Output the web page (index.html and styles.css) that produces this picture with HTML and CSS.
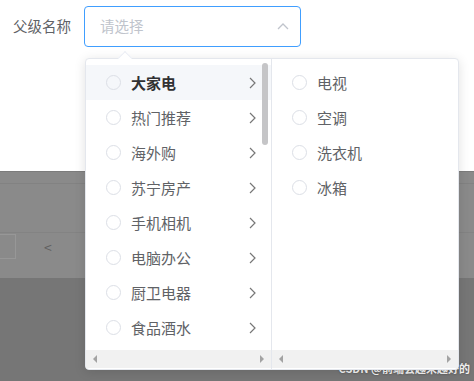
FILE: index.html
```html
<!DOCTYPE html>
<html lang="zh-CN">
<head>
    <meta charset="UTF-8" />
    <title>级联选择</title>
    <link rel="stylesheet" href="styles.css">
</head>
<body>
<div class="top">
    <div class="form-row">
        <label class="form-label">父级名称</label>
        <div class="select-input">
            <span class="placeholder">请选择</span>
            <svg class="caret" width="12" height="8" viewBox="0 0 12 8"><path d="M1 7 L6 2 L11 7" fill="none" stroke="#c0c4cc" stroke-width="1.3"/></svg>
        </div>
    </div>
</div>

<div class="backdrop">
    <div class="backdrop-upper">
        <div class="bar-line"></div>
        <div class="pager-row">
            <div class="pager-box"></div>
            <span class="pager-prev">&lt;</span>
        </div>
    </div>
    <div class="backdrop-lower"></div>
    <div class="watermark">CSDN @前端会越来越好的</div>
</div>

<div class="cascader">
    <div class="pointer"></div>
    <div class="menu menu-first">
        <div class="menu-list">
            <div class="item active"><span class="radio"></span><span class="label">大家电</span><svg class="chev" width="7" height="12" viewBox="0 0 7 12"><path d="M1 1 L6 6 L1 11" fill="none" stroke="#777" stroke-width="1.2"/></svg></div>
            <div class="item"><span class="radio"></span><span class="label">热门推荐</span><svg class="chev" width="7" height="12" viewBox="0 0 7 12"><path d="M1 1 L6 6 L1 11" fill="none" stroke="#777" stroke-width="1.2"/></svg></div>
            <div class="item"><span class="radio"></span><span class="label">海外购</span><svg class="chev" width="7" height="12" viewBox="0 0 7 12"><path d="M1 1 L6 6 L1 11" fill="none" stroke="#777" stroke-width="1.2"/></svg></div>
            <div class="item"><span class="radio"></span><span class="label">苏宁房产</span><svg class="chev" width="7" height="12" viewBox="0 0 7 12"><path d="M1 1 L6 6 L1 11" fill="none" stroke="#777" stroke-width="1.2"/></svg></div>
            <div class="item"><span class="radio"></span><span class="label">手机相机</span><svg class="chev" width="7" height="12" viewBox="0 0 7 12"><path d="M1 1 L6 6 L1 11" fill="none" stroke="#777" stroke-width="1.2"/></svg></div>
            <div class="item"><span class="radio"></span><span class="label">电脑办公</span><svg class="chev" width="7" height="12" viewBox="0 0 7 12"><path d="M1 1 L6 6 L1 11" fill="none" stroke="#777" stroke-width="1.2"/></svg></div>
            <div class="item"><span class="radio"></span><span class="label">厨卫电器</span><svg class="chev" width="7" height="12" viewBox="0 0 7 12"><path d="M1 1 L6 6 L1 11" fill="none" stroke="#777" stroke-width="1.2"/></svg></div>
            <div class="item"><span class="radio"></span><span class="label">食品酒水</span><svg class="chev" width="7" height="12" viewBox="0 0 7 12"><path d="M1 1 L6 6 L1 11" fill="none" stroke="#777" stroke-width="1.2"/></svg></div>
        </div>
        <div class="vthumb"></div>
        <div class="hscroll"><span class="tri tri-left"></span><span class="tri tri-right"></span></div>
    </div>
    <div class="menu menu-second">
        <div class="menu-list">
            <div class="item"><span class="radio"></span><span class="label">电视</span></div>
            <div class="item"><span class="radio"></span><span class="label">空调</span></div>
            <div class="item"><span class="radio"></span><span class="label">洗衣机</span></div>
            <div class="item"><span class="radio"></span><span class="label">冰箱</span></div>
        </div>
        <div class="hscroll"><span class="tri tri-left"></span><span class="tri tri-right"></span></div>
    </div>
</div>
</body>
</html>
```

FILE: styles.css
```css
* {
    box-sizing: border-box;
    margin: 0;
    padding: 0;
    font-family: "Helvetica Neue", "Noto Sans CJK SC", "Liberation Sans", sans-serif;
}

body {
    width: 474px;
    height: 381px;
    overflow: hidden;
    background-color: #fff;
    position: relative;
}

.top {
    height: 171px;
    background-color: #fff;
    padding-top: 6px;
}

.form-row {
    display: flex;
    align-items: center;
}

.form-label {
    width: 84px;
    padding-left: 13px;
    padding-bottom: 3px;
    font-size: 14.5px;
    color: #606266;
}

.select-input {
    width: 217px;
    height: 41px;
    border: 1px solid #409eff;
    border-radius: 4px;
    display: flex;
    align-items: center;
    justify-content: space-between;
    padding: 0 11px 2px 15px;
}

.placeholder {
    font-size: 14.5px;
    color: #c0c4cc;
}

.backdrop {
    height: 210px;
    display: flex;
    flex-direction: column;
}

.backdrop-upper {
    height: 107px;
    background-color: #8a8a8a;
    border-top: 1px solid #7c7c7c;
    padding-top: 11px;
}

.bar-line {
    height: 1px;
    background-color: #828282;
}

.pager-row {
    margin-top: 48px;
    display: flex;
    align-items: center;
    gap: 28px;
    border-top: 1px solid #838383;
    padding-top: 1px;
}

.pager-box {
    width: 16px;
    height: 25px;
    border: 1px solid #979797;
    border-left: none;
}

.pager-prev {
    color: #5f5f5f;
    font-size: 14px;
}

.backdrop-lower {
    flex: 1;
    background-color: #767676;
}

.watermark {
    position: absolute;
    right: 4px;
    bottom: 5px;
    font-size: 11px;
    font-weight: bold;
    color: #f2f2f2;
    text-shadow: 0 0 2px #444;
}

.cascader {
    position: absolute;
    left: 85px;
    top: 58px;
    width: 374px;
    height: 312px;
    display: flex;
    background-color: #fff;
    border: 1px solid #e4e7ed;
    border-radius: 4px;
    box-shadow: 0 2px 12px rgba(0, 0, 0, 0.12);
}

.pointer {
    position: absolute;
    left: 34px;
    top: -6px;
    width: 10px;
    height: 10px;
    background-color: #fff;
    border-left: 1px solid #ebeef5;
    border-top: 1px solid #ebeef5;
    transform: rotate(45deg);
}

.menu {
    position: relative;
    display: flex;
    flex-direction: column;
    height: 100%;
}

.menu-first {
    width: 186px;
    border-right: 1px solid #e4e7ed;
}

.menu-second {
    flex: 1;
}

.menu-list {
    flex: 1;
    padding-top: 6px;
}

.item {
    height: 35px;
    display: flex;
    align-items: center;
    padding-left: 20px;
    font-size: 15px;
    color: #606266;
}

.item.active {
    background-color: #f5f7fa;
    color: #303133;
    font-weight: bold;
}

.radio {
    width: 15px;
    height: 15px;
    border: 1px solid #dcdfe6;
    border-radius: 50%;
    margin-right: 10px;
}

.label {
    flex: 1;
}

.chev {
    margin-right: 15px;
}

.vthumb {
    position: absolute;
    right: 3px;
    top: 4px;
    width: 6px;
    height: 82px;
    border-radius: 3px;
    background-color: #c5c5c7;
}

.hscroll {
    height: 18px;
    margin-bottom: 1px;
    background-color: #f1f1f1;
    display: flex;
    align-items: center;
    justify-content: space-between;
    padding: 0 7px;
}

.tri {
    width: 0;
    height: 0;
    border-top: 4px solid transparent;
    border-bottom: 4px solid transparent;
}

.tri-left {
    border-right: 4px solid #a3a3a3;
}

.tri-right {
    border-left: 4px solid #a3a3a3;
}
```
